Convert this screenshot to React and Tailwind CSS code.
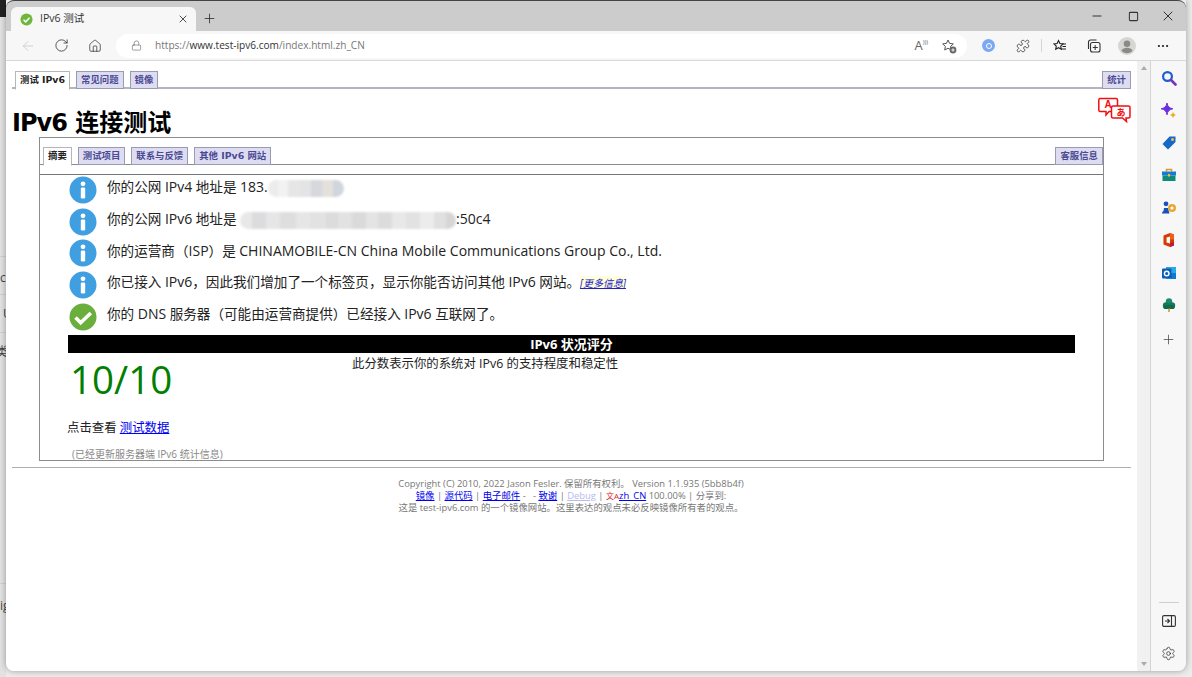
import React from "react";
import { ArrowLeft, RotateCw, Home, Lock, X, Plus, Minus, Square, Puzzle, MoreHorizontal, Settings } from "lucide-react";

const tabFont = "font-['DejaVu_Sans','Noto_Sans_CJK_SC',sans-serif]";

const InfoIcon = () => (
  <svg width="28" height="28" viewBox="0 0 28 28" className="shrink-0">
    <circle cx="14" cy="14" r="13.5" fill="#3f9fe0" />
    <circle cx="14" cy="7.8" r="2.4" fill="#fff" />
    <rect x="11.8" y="11.5" width="4.4" height="11" rx="1.2" fill="#fff" />
  </svg>
);

const OkIcon = () => (
  <svg width="28" height="28" viewBox="0 0 28 28" className="shrink-0">
    <circle cx="14" cy="14" r="13.5" fill="#6aae3c" />
    <path d="M6.5 14.5l5.2 5.2L21.8 10" fill="none" stroke="#fff" strokeWidth="3.6" />
  </svg>
);

const L = ({ children }) => <span className="text-[14px]">{children}</span>;

// smudged out address parts
const Smudge = ({ cells }) => (
  <span className="inline-flex h-[17px] align-middle blur-[1px] rounded-full overflow-hidden">
    {cells.map((c, i) => (
      <span key={i} className={c} />
    ))}
  </span>
);

const row1Cells = [
  "w-[10px] bg-[#ececec]",
  "w-[10px] bg-[#f2f2f2]",
  "w-[12px] bg-[#e6e6e6]",
  "w-[11px] bg-[#e4e4e4]",
  "w-[11px] bg-[#d6d8dc]",
  "w-[11px] bg-[#e4e0dc]",
  "w-[11px] bg-[#d0d6dc]",
];

const row2Cells = [
  "w-[12px] bg-[#e8e8e8]",
  "w-[14px] bg-[#dcdcde]",
  "w-[14px] bg-[#e6e6e6]",
  "w-[16px] bg-[#dedede]",
  "w-[14px] bg-[#e6e6e6]",
  "w-[16px] bg-[#e2e2e2]",
  "w-[12px] bg-[#dcdcdc]",
  "w-[14px] bg-[#e2e2e2]",
  "w-[14px] bg-[#dadada]",
  "w-[12px] bg-[#e4e4e4]",
  "w-[14px] bg-[#dcdcdc]",
  "w-[14px] bg-[#e8e8e8]",
  "w-[14px] bg-[#e2e2e2]",
  "w-[14px] bg-[#ececec]",
  "w-[12px] bg-[#e0e0e0]",
  "w-[10px] bg-[#d6d6d6]",
];

const Row = ({ ok, children }) => (
  <div className="flex items-center h-[31.7px] shrink-0 pl-[29px] gap-[10px]">
    {ok ? <OkIcon /> : <InfoIcon />}
    <div className="text-[13.6px] text-[#222] whitespace-nowrap mb-[6px]">{children}</div>
  </div>
);

const Tab = ({ active, children, right }) => (
  <div
    className={`${tabFont} text-[9.4px] font-bold h-[18px] flex items-center px-[4px] border border-[#9a9ab0] mb-[-1px] ${
      active
        ? "bg-white text-[#222] border-b-white border-[#b5b5bb] h-[19px]"
        : "bg-[#dedcf0] text-[#4a4a94]"
    } ${right ? "ml-auto" : ""}`}
  >
    {children}
  </div>
);

const TranslateIcon = () => (
  <svg width="34" height="26" viewBox="0 0 34 26">
    <path d="M2 1.5h16a1.5 1.5 0 0 1 1.5 1.5v10a1.5 1.5 0 0 1-1.5 1.5h-7l-3 3.5v-3.5H2A1.5 1.5 0 0 1 .8 13V3A1.5 1.5 0 0 1 2 1.5z" fill="#fff" stroke="#f01010" strokeWidth="1.5" />
    <text x="10" y="11" fontSize="10" fontWeight="700" fill="#f01010" textAnchor="middle" fontFamily="Liberation Sans">A</text>
    <path d="M15 9h15.5a1.5 1.5 0 0 1 1.5 1.5v9a1.5 1.5 0 0 1-1.5 1.5H28l.5 3.5-4-3.5H15a1.5 1.5 0 0 1-1.5-1.5v-9A1.5 1.5 0 0 1 15 9z" fill="#fff" stroke="#f01010" strokeWidth="1.5" />
    <text x="23" y="19" fontSize="9" fontWeight="700" fill="#f01010" textAnchor="middle" fontFamily="Noto Sans CJK JP">あ</text>
  </svg>
);

const SideIcons = () => (
  <div className="w-[36px] bg-[#f7f7f7] border-l border-[#d4d4d4] flex flex-col items-center pt-[1px] pb-[2px] rounded-br-lg shrink-0">
    <div className="h-[32.4px] flex items-center justify-center">
      <svg width="16" height="16" viewBox="0 0 16 16"><circle cx="6.5" cy="6.5" r="4.4" fill="none" stroke="#1a5fd0" strokeWidth="2.2" /><path d="M10 10l4.5 4.5" stroke="#7a30c0" strokeWidth="2.6" strokeLinecap="round" /></svg>
    </div>
    <div className="h-[32.4px] flex items-center justify-center">
      <svg width="17" height="17" viewBox="0 0 17 17"><path d="M7 1c.6 3.4 2.1 5 5.8 5.8C9.1 7.6 7.6 9.2 7 12.8 6.4 9.2 4.9 7.6 1.2 6.8 4.9 6 6.4 4.4 7 1z" fill="#6b2fe0" stroke="#6b2fe0" strokeWidth="1" /><path d="M13 10l1 2 2 1-2 1-1 2-1-2-2-1 2-1z" fill="#f0a820" /></svg>
    </div>
    <div className="h-[32.4px] flex items-center justify-center">
      <svg width="16" height="16" viewBox="0 0 16 16"><path d="M8.5 1.5h6V7L7 14.5 1.5 9z" fill="#1667c9" /><circle cx="11.5" cy="4.5" r="1.5" fill="#f0c040" /></svg>
    </div>
    <div className="h-[32.4px] flex items-center justify-center">
      <svg width="16" height="16" viewBox="0 0 16 16"><path d="M5.5 4.5V2.5h5v2" fill="none" stroke="#d89a20" strokeWidth="1.5" /><rect x="1" y="4.5" width="14" height="4" fill="#1a7ad0" /><rect x="1.5" y="8.5" width="13" height="5.5" fill="#0e8a7a" /><rect x="7" y="7" width="2" height="2.5" fill="#f0c040" /></svg>
    </div>
    <div className="h-[32.4px] flex items-center justify-center">
      <svg width="16" height="16" viewBox="0 0 16 16"><circle cx="5" cy="3.8" r="2.4" fill="#1a4fc0" /><path d="M1 13.5c0-1 .5-2 1.5-2.5L3 8h4l1.5 5.5z" fill="#1a4fc0" /><circle cx="11" cy="8" r="4" fill="#e8a830" /><circle cx="11" cy="8" r="1.5" fill="#fff" /></svg>
    </div>
    <div className="h-[32.4px] flex items-center justify-center">
      <svg width="16" height="16" viewBox="0 0 16 16"><path fillRule="evenodd" d="M2.5 3.5L9 1l4 1.5v11L9 15l-6.5-2.5zM5.5 5.5v5L9 11.5v-7z" fill="#d83b01" /><path d="M9 1l4 1.5v5H9z" fill="#e8641e" /><path d="M9 11l4-1v3.5L9 15z" fill="#b81c3c" /></svg>
    </div>
    <div className="h-[32.4px] flex items-center justify-center">
      <svg width="16" height="16" viewBox="0 0 16 16"><rect x="5" y="2" width="10" height="12" fill="#28a8ea" /><rect x="10" y="8" width="5" height="6" fill="#0f78d4" /><rect x="1" y="3.5" width="9.5" height="10" rx="1" fill="#0a5fb4" /><circle cx="5.7" cy="8.5" r="2.3" fill="none" stroke="#fff" strokeWidth="1.4" /></svg>
    </div>
    <div className="h-[32.4px] flex items-center justify-center">
      <svg width="16" height="16" viewBox="0 0 16 16"><circle cx="8" cy="4.5" r="3.2" fill="#1a8a70" /><circle cx="5" cy="8.5" r="3.2" fill="#157a5a" /><circle cx="11" cy="8.5" r="3.2" fill="#157a5a" /><rect x="2.5" y="8" width="11" height="4" rx="1.5" fill="#0f6a50" /><rect x="7.2" y="11.5" width="1.6" height="3.5" fill="#d09a30" /></svg>
    </div>
    <div className="mt-[2px] h-[32px] flex items-center justify-center">
      <Plus size={15} strokeWidth={1.2} className="text-[#444]" />
    </div>
    <div className="mt-auto w-[20px] border-t border-[#cfcfcf] mb-[2px]" />
    <div className="h-[32px] flex items-center justify-center">
      <svg width="14" height="12" viewBox="0 0 14 12"><rect x=".6" y=".6" width="12.8" height="10.8" rx="1.4" fill="none" stroke="#333" strokeWidth="1.1" /><path d="M9.5.6v10.8" stroke="#333" strokeWidth="1.1" /><path d="M3 6h4M5.5 4l2 2-2 2" fill="none" stroke="#333" strokeWidth="1.1" /></svg>
    </div>
    <div className="h-[32px] flex items-center justify-center">
      <Settings size={15} strokeWidth={1.2} className="text-[#333]" />
    </div>
  </div>
);

export default function App() {
  return (
    <div className="w-[1192px] h-[677px] bg-[#ececec] flex overflow-hidden font-['Open_Sans','Noto_Sans_CJK_SC',sans-serif]">
      {/* desktop sliver behind the window */}
      <div className="w-[6px] h-full shrink-0 flex flex-col text-[12px] text-[#444] overflow-hidden bg-[#e2e2e2]">
        <div className="h-[17px] bg-[#222] shrink-0" />
        <div className="h-[240px] border-b border-[#d0d0d0] shrink-0" />
        <div className="h-[38px] border-b border-[#d0d0d0] shrink-0 pt-[12px]">c</div>
        <div className="h-[38px] border-b border-[#d0d0d0] shrink-0 pt-[10px] pl-[3px]">U</div>
        <div className="h-[38px] shrink-0 pt-[10px] ml-[-4px]">类</div>
        <div className="h-[213px] border-b border-[#d0d0d0] shrink-0" />
        <div className="pt-[13px]">ig</div>
      </div>

      <div className="w-[1180px] h-[671px] flex flex-col shrink-0 rounded-b-lg overflow-hidden shadow-[0_0_6px_rgba(0,0,0,0.35)]">
        {/* tab strip */}
        <div className="h-[31px] bg-[#cccccc] border-t border-[#444] flex items-end shrink-0 rounded-t-lg">
          <div className="ml-[5px] w-[185px] h-[24px] bg-[#f7f7f7] rounded-t-md flex items-center pl-[9px] pr-[7px] text-[10.5px] text-[#333]">
            <svg width="13" height="13" viewBox="0 0 14 14" className="shrink-0"><circle cx="7" cy="7" r="6.5" fill="#6fb63d" /><path d="M3.8 7.2l2.3 2.3 4.2-4.4" fill="none" stroke="#fff" strokeWidth="1.6" /></svg>
            <span className="ml-[7px]">IPv6 测试</span>
            <X size={12} strokeWidth={1.6} className="ml-auto text-[#222]" />
          </div>
          <Plus size={15} strokeWidth={1.2} className="ml-[6px] mb-[5px] text-[#222]" />
          <div className="ml-auto flex items-center h-[30px] text-[#333]">
            <Minus size={14} strokeWidth={1.7} className="mr-[24px]" />
            <Square size={11} strokeWidth={2.2} className="mr-[21px]" />
            <X size={16} strokeWidth={1.5} className="mr-[10px]" />
          </div>
        </div>

        {/* toolbar */}
        <div className="h-[30px] bg-[#f7f7f7] border-b border-[#d8d8d8] flex items-center shrink-0 text-[#333]">
          <ArrowLeft size={16} strokeWidth={1.1} className="ml-[14px] text-[#c4c4c4]" />
          <RotateCw size={15} strokeWidth={1.3} className="ml-[18px]" />
          <Home size={14} strokeWidth={1.3} className="ml-[19px]" />
          <div className="ml-[14px] w-[851px] h-[24px] bg-white rounded-full flex items-center pl-[15px] pr-[10px]">
            <Lock size={11} strokeWidth={1.2} className="text-[#555]" />
            <div className="ml-[13px] text-[10.1px] text-[#777]">
              https://<span className="text-[#333]">www.test-ipv6.com</span>/index.html.zh_CN
            </div>
            <div className="ml-auto flex items-center gap-[13px] text-[#666]">
              <span className="text-[13px] leading-none">A<span className="text-[6px] align-top">)))</span></span>
              <svg width="16" height="16" viewBox="0 0 16 16">
                <path d="M7 2l1.6 3.4 3.7.5-2.7 2.5.7 3.6L7 10.2l-3.3 1.8.7-3.6L1.7 5.9l3.7-.5z" fill="none" stroke="#555" strokeWidth="1" />
                <circle cx="12" cy="12" r="3.4" fill="#666" />
                <path d="M12 10.3v3.4M10.3 12h3.4" stroke="#fff" strokeWidth=".9" />
              </svg>
            </div>
          </div>
          <div className="ml-[15px] w-[13px] h-[13px] rounded-full bg-[#7aa8f5] flex items-center justify-center">
            <div className="w-[6px] h-[6px] rounded-full border border-white" />
          </div>
          <Puzzle size={14} strokeWidth={1.3} className="ml-[21px]" />
          <div className="ml-[11px] h-[13px] border-l border-[#d4d4d4]" />
          <svg width="14" height="14" viewBox="0 0 14 14" className="ml-[11px]">
            <path d="M5.5 1.5l1.4 3 3.1.4-2.3 2.2.6 3.2-2.8-1.6-2.8 1.6.6-3.2L1 4.9l3.1-.4z" fill="none" stroke="#222" strokeWidth="1.1" />
            <path d="M9 5h4M9.5 7.5h3.5M8.5 10H13" stroke="#222" strokeWidth="1" />
          </svg>
          <svg width="14" height="14" viewBox="0 0 14 14" className="ml-[20px]"><rect x="3.5" y="3.5" width="9.5" height="9.5" rx="2" fill="none" stroke="#333" strokeWidth="1.1" /><path d="M8.2 6v5M5.8 8.5h5" stroke="#333" strokeWidth="1" /><path d="M1.5 10V3a2 2 0 0 1 2-2h6" fill="none" stroke="#333" strokeWidth="1.1" /></svg>
          <svg width="18" height="18" viewBox="0 0 18 18" className="ml-[17px]">
            <circle cx="9" cy="9" r="9" fill="#d6d6d2" />
            <circle cx="9" cy="6.8" r="3.3" fill="#8a8a88" />
            <path d="M3.5 13.5c1-2 3-2.8 5.5-2.8s4.5.8 5.5 2.8c-1.2 1.8-3.2 2.8-5.5 2.8s-4.3-1-5.5-2.8z" fill="#8a8a88" />
          </svg>
          <MoreHorizontal size={14} strokeWidth={1.8} className="ml-[20px] text-[#222]" />
        </div>

        <div className="flex-1 flex min-h-0">
          {/* page */}
          <div className="w-[1131px] bg-white flex flex-col px-[6px] pt-[10px]">
            <div className="flex border-b-2 border-[#b4b4bc] h-[18px] pl-[3px] gap-[6px]">
              <Tab active>测试 IPv6</Tab>
              <Tab>常见问题</Tab>
              <Tab>镜像</Tab>
              <Tab right>统计</Tab>
            </div>
            <div className="relative">
              <h1 className={`${tabFont} text-[24px] font-bold text-black leading-[30px] mt-[19px]`}>
                <span className="tracking-[-1px]">IPv6</span> 连接测试
              </h1>
              <div className="absolute right-[-1px] top-[8px]">
                <TranslateIcon />
              </div>
            </div>

            {/* main box */}
            <div className="ml-[27px] w-[1065px] h-[324px] mt-[-1px] border border-[#8c8c8c] flex flex-col shrink-0">
              <div className="flex border-b border-[#8c8c8c] h-[27px] pt-[9px] pl-[3px] gap-[6px] shrink-0">
                <Tab active>摘要</Tab>
                <Tab>测试项目</Tab>
                <Tab>联系与反馈</Tab>
                <Tab>其他 IPv6 网站</Tab>
                <Tab right>客服信息</Tab>
              </div>
              <div className="h-[10px] border-b border-[#777] shrink-0" />
              <div className="mt-[-1px]">
                <Row>
                  你的公网 <L>IPv4</L> 地址是 <L>183.</L><Smudge cells={row1Cells} />
                </Row>
                <Row>
                  你的公网 <L>IPv6</L> 地址是 <Smudge cells={row2Cells} /><L>:50c4</L>
                </Row>
                <Row>你的运营商（<L>ISP</L>）是 <L>CHINAMOBILE-CN China Mobile Communications Group Co., Ltd.</L></Row>
                <Row>
                  你已接入 <L>IPv6</L>，因此我们增加了一个标签页，显示你能否访问其他 <L>IPv6</L> 网站。
                  <a href="#" className="text-[10px] italic text-[#2020d0] underline bg-[#ffffd8]">[更多信息]</a>
                </Row>
                <Row ok>你的 <L>DNS</L> 服务器（可能由运营商提供）已经接入 <L>IPv6</L> 互联网了。</Row>
              </div>

              <div className="ml-[28px] mr-[28px] mt-[3px] h-[18px] bg-black text-white text-[13px] font-bold flex items-center justify-center shrink-0">
                IPv6 状况评分
              </div>
              <div className="flex ml-[30px] mt-[1px] shrink-0">
                <div className="w-[282px] text-[38.5px] text-[#008000] leading-[50px]">10/10</div>
                <div className="pt-[1px] text-[12.4px] text-[#222] leading-[18px]">此分数表示你的系统对 IPv6 的支持程度和稳定性</div>
              </div>
              <div className="ml-[27px] mt-[14px] text-[12.4px] text-[#222] leading-[20px] shrink-0">
                点击查看 <a href="#" className="text-[#0000ee] underline">测试数据</a>
              </div>
              <div className="ml-[32px] mt-[9px] text-[10px] text-[#888] leading-[14px] shrink-0">(已经更新服务器端 IPv6 统计信息)</div>
            </div>

            <div className="mt-[6px] border-t border-[#b0b0b0]" />
            <div className="w-[1118px] text-center text-[9.4px] text-[#777] leading-[12px] mt-[10px]">
              <div>Copyright (C) 2010, 2022 Jason Fesler. 保留所有权利。 Version 1.1.935 (5bb8b4f)</div>
              <div>
                <a href="#" className="text-[#0000ee] underline">镜像</a> | <a href="#" className="text-[#0000ee] underline">源代码</a> | <a href="#" className="text-[#0000ee] underline">电子邮件</a> - &nbsp; - <a href="#" className="text-[#0000ee] underline">致谢</a> | <a href="#" className="text-[#b8b8f0] underline">Debug</a> | <span className="text-[#e02020] text-[8px]">文A</span><a href="#" className="text-[#0000ee] underline">zh_CN</a> 100.00% | 分享到:
              </div>
              <div>这是 test-ipv6.com 的一个镜像网站。这里表达的观点未必反映镜像所有者的观点。</div>
            </div>
          </div>

          {/* scrollbar */}
          <div className="w-[13px] bg-[#f1f1f1] flex flex-col items-center justify-between py-[5px] shrink-0">
            <div className="w-0 h-0 border-x-[3.5px] border-x-transparent border-b-[4px] border-b-[#aaa]" />
            <div className="w-0 h-0 border-x-[3.5px] border-x-transparent border-t-[4px] border-t-[#aaa]" />
          </div>
          <SideIcons />
        </div>
      </div>
    </div>
  );
}
